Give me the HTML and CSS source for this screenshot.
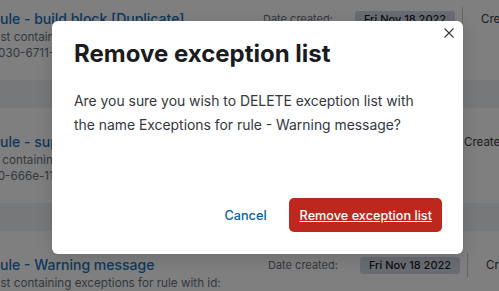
FILE: index.html
```html
<!DOCTYPE html>
<html>
<head>
<meta charset="utf-8">
<link rel="stylesheet" href="styles.css">
</head>
<body>
<div class="page">
  <div class="list">
    <div class="card">
      <div class="info">
        <div class="rule-title">Rule - build block [Duplicate]</div>
        <div class="rule-desc">List containing exceptions for rule with id:</div>
        <div class="rule-id">5030-6711-11ed-9022-0242ac120002</div>
      </div>
      <div class="meta">
        <span class="meta-label">Date created:</span>
        <span class="badge">Fri Nov 18 2022</span>
        <span class="divider"></span>
        <span class="by">Created by: elastic</span>
      </div>
    </div>
    <div class="card card--shift">
      <div class="info">
        <div class="rule-title">Rule - suppressed alerts</div>
        <div class="rule-desc">A containing exceptions for rule with id:</div>
        <div class="rule-id">c0-666e-11ed-9022-0242ac120002</div>
      </div>
      <div class="meta">
        <span class="meta-label">Date created:</span>
        <span class="badge">Fri Nov 18 2022</span>
        <span class="by by--tight">Created by: elastic</span>
      </div>
    </div>
    <div class="card card--shift">
      <div class="info">
        <div class="rule-title">Rule - Warning message</div>
        <div class="rule-desc">List containing exceptions for rule with id:</div>
        <div class="rule-id">c4e5d880-6712-11ed-9022-0242ac120002</div>
      </div>
      <div class="meta">
        <span class="meta-label">Date created:</span>
        <span class="badge">Fri Nov 18 2022</span>
        <span class="divider"></span>
        <span class="by">Created by: elastic</span>
      </div>
    </div>
  </div>
</div>

<div class="overlay"></div>

<div class="modal" role="dialog">
  <button class="close" aria-label="Close">
    <svg width="10" height="10" viewBox="0 0 10 10"><path d="M0.5 0.5 L9.5 9.5 M9.5 0.5 L0.5 9.5" stroke="#343741" stroke-width="1.1" fill="none"/></svg>
  </button>
  <h2 class="modal-title">Remove exception list</h2>
  <p class="modal-body">Are you sure you wish to DELETE exception list with the name Exceptions for rule - Warning message?</p>
  <div class="modal-footer">
    <button class="btn-cancel">Cancel</button>
    <button class="btn-danger">Remove exception list</button>
  </div>
</div>
</body>
</html>
```

FILE: styles.css
```css
html, body {
  margin: 0;
  padding: 0;
}
body {
  font-family: Inter, "Noto Sans", sans-serif;
  background: #eef0f4;
  width: 499px;
  height: 291px;
  overflow: hidden;
  position: relative;
}
.page {
  width: 499px;
  height: 291px;
  overflow: hidden;
}
.list {
  margin-top: -15px;
  margin-left: -21px;
  width: 620px;
  display: flex;
  flex-direction: column;
  gap: 28px;
}
.card {
  background: #ffffff;
  height: 95px;
  box-sizing: border-box;
  padding: 24px 12px 0;
  display: flex;
  align-items: flex-start;
}
.info {
  width: 272px;
  flex: none;
}
.card--shift .info {
  width: 277px;
}
.rule-title {
  font-size: 14px;
  line-height: 20px;
  font-weight: 500;
  color: #1d6fb8;
  white-space: nowrap;
}
.rule-desc, .rule-id {
  font-size: 11.7px;
  line-height: 16px;
  color: #69707d;
  white-space: nowrap;
}
.meta {
  display: flex;
  align-items: center;
  height: 20px;
  font-size: 11px;
  color: #69707d;
  white-space: nowrap;
}
.badge {
  margin-left: 22px;
  background: #d3dae6;
  color: #1a1c21;
  font-weight: 500;
  font-size: 11px;
  line-height: 17px;
  padding: 0 9px;
  border-radius: 3px;
}
.divider {
  width: 1px;
  height: 24px;
  background: #c6cbd4;
  margin-left: 7px;
}
.by {
  margin-left: 18px;
  font-size: 11.5px;
  color: #343741;
}
.by--tight {
  margin-left: 4px;
}

.overlay {
  position: absolute;
  inset: 0;
  background: rgba(0, 0, 0, 0.5);
}

.modal {
  position: absolute;
  left: 52px;
  top: 21px;
  width: 411px;
  height: 233px;
  box-sizing: border-box;
  background: #ffffff;
  border-radius: 6px;
  padding: 19px 21px 22px 22px;
  display: flex;
  flex-direction: column;
  box-shadow: 0 4px 16px rgba(0, 0, 0, 0.15);
}
.close {
  position: absolute;
  right: 6px;
  top: 4px;
  width: 16px;
  height: 16px;
  border: 0;
  background: transparent;
  padding: 0;
  display: flex;
  align-items: center;
  justify-content: center;
}
.modal-title {
  margin: 0;
  font-size: 24px;
  line-height: 28px;
  font-weight: 700;
  color: #1a1c21;
}
.modal-body {
  margin: 21px 20px 0 0;
  font-size: 13.9px;
  line-height: 24px;
  color: #343741;
}
.modal-footer {
  margin-top: auto;
  display: flex;
  justify-content: flex-end;
  align-items: center;
}
.btn-cancel {
  border: 0;
  background: transparent;
  font-family: inherit;
  font-size: 12.7px;
  font-weight: 500;
  color: #0061a6;
  padding: 0 8px;
  height: 34px;
  margin-right: 14px;
}
.btn-danger {
  border: 0;
  background: #bd271e;
  color: #ffffff;
  font-family: inherit;
  font-size: 12.7px;
  font-weight: 500;
  text-decoration: underline;
  height: 34px;
  padding: 0 10px 0 11px;
  border-radius: 5px;
}
```
